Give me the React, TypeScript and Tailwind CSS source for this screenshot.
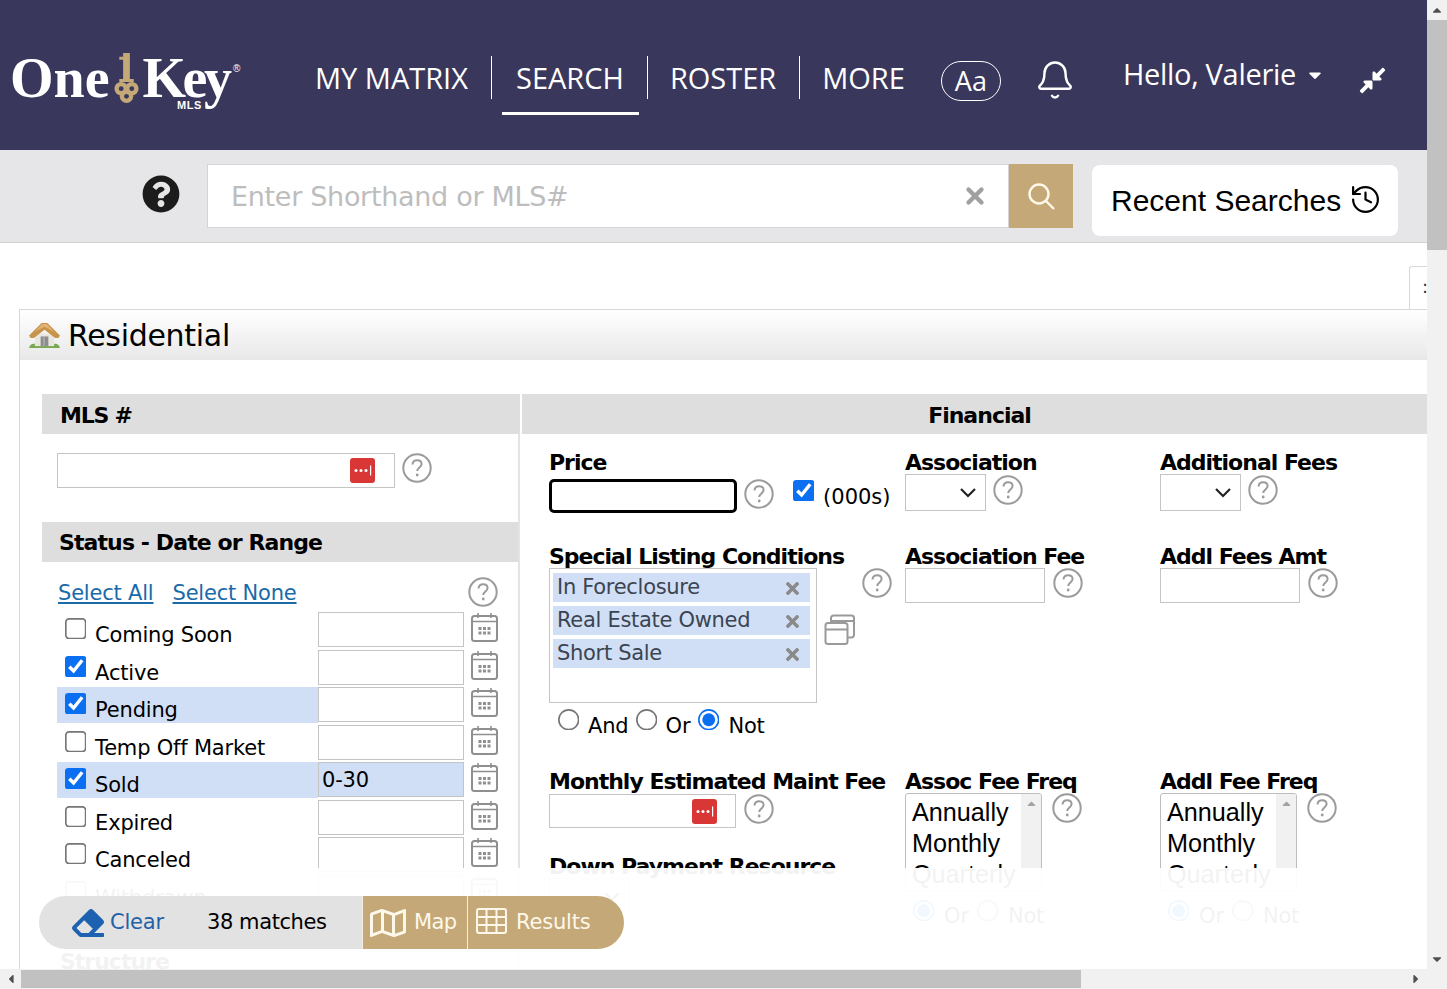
import { Bell, History, X } from "lucide-react";
import { FaCaretDown, FaCaretLeft, FaCaretRight, FaCaretUp, FaCompressAlt, FaEraser, FaQuestionCircle, FaRegMap, FaTimes } from "react-icons/fa";

type Status = { label: string; checked?: boolean; range?: string };

const statuses: Status[] = [
  { label: "Coming Soon" },
  { label: "Active", checked: true },
  { label: "Pending", checked: true },
  { label: "Temp Off Market" },
  { label: "Sold", checked: true, range: "0-30" },
  { label: "Expired" },
  { label: "Canceled" },
  { label: "Withdrawn" },
];

const Help = () => (
  <svg viewBox="0 0 30 30" className="w-[30px] h-[30px] shrink-0">
    <circle cx="15" cy="15" r="13.7" fill="none" stroke="#9b9b9b" strokeWidth="2" />
    <path d="M10.5 11.5c.3-2.8 2.2-4.2 4.6-4.2 2.6 0 4.5 1.5 4.5 3.8 0 3.3-4.4 3.5-4.4 7" fill="none" stroke="#9b9b9b" strokeWidth="2" />
    <circle cx="15.2" cy="22" r="1.4" fill="#9b9b9b" />
  </svg>
);

const Calendar = () => (
  <svg viewBox="0 0 27 30" className="w-[27px] h-[30px] shrink-0" fill="none" stroke="#8f8f8f">
    <rect x="1" y="4" width="25" height="25" rx="2.5" strokeWidth="2" />
    <path d="M1 9.5h25M7 1v5M20 1v5" strokeWidth="1.6" />
    <path d="M7.500 16.500h3M12 16.500h3M16.500 16.500h3M7.500 21h3M12 21h3M16.500 21h3" strokeWidth="3" />
  </svg>
);

const PassIcon = () => (
  <svg viewBox="0 0 25 25" className="w-[25px] h-[25px] shrink-0">
    <rect width="25" height="25" rx="3" fill="#d93735" />
    <circle cx="6" cy="12.5" r="1.5" fill="#fff" />
    <circle cx="11" cy="12.5" r="1.5" fill="#fff" />
    <circle cx="16" cy="12.5" r="1.5" fill="#fff" />
    <rect x="20" y="7.5" width="1.2" height="10" fill="#fff" />
  </svg>
);

const Copies = () => (
  <svg viewBox="0 0 32 31" className="w-[32px] h-[31px]" fill="none" stroke="#9a9a9a" strokeWidth="2">
    <rect x="1.5" y="9" width="22" height="21" rx="2.5" />
    <path d="M1.5 15.5h22M7 9V4a2.5 2.5 0 0 1 2.500-2.500h18a2.500 2.500 0 0 1 2.500 2.500v17a2.500 2.500 0 0 1-2.500 2.500H23.500M7 7h23" />
  </svg>
);

const House = () => (
  <svg viewBox="0 0 32 28" className="w-[31px] h-[27px] shrink-0">
    <path d="M0 27c1-4 4-5 7-4h18c3-1 6 0 7 4z" fill="#79a851" />
    <path d="M6 12h20v13H6z" fill="#e9e6df" />
    <path d="M12 15h8v10h-8z" fill="#8d8d8d" />
    <path d="M15.500 15v10" stroke="#bdbdbd" />
    <path d="M13 1h6l13 13-1.500 2.500H27L16 8 5 16.500H1.500L0 14z" fill="#c8934b" />
    <path d="M13.500 2h5L26 10l-10-5-10 5z" fill="#e0b274" />
  </svg>
);

const Check = ({ checked, radio }: { checked?: boolean; radio?: boolean }) => (
  <input
    type={radio ? "radio" : "checkbox"}
    defaultChecked={checked}
    className="block m-0 w-[14px] h-[14px] [zoom:1.65] accent-[#0b6ff2]"
  />
);

const Chevron = () => (
  <svg viewBox="0 0 16 10" className="w-[16px] h-[10px]" fill="none" stroke="#222" strokeWidth="2.200">
    <path d="m1 1 7 7 7-7" />
  </svg>
);

const Dropdown = () => (
  <div className="w-[81px] h-[37px] border border-[#c4c4c4] flex items-center justify-end pr-[9px]">
    <Chevron />
  </div>
);

const Listbox = () => (
  <div className="w-[137px] h-[98px] border border-[#bdbdbd] rounded-t-[3px] flex overflow-hidden">
    <div className="flex-1 pl-[6px] pt-[3px] font-['Liberation_Sans',sans-serif] text-[25.200px] leading-[31px] text-black">
      <div>Annually</div>
      <div>Monthly</div>
      <div>Quarterly</div>
    </div>
    <div className="w-[20px] bg-[#f1f1f1] flex justify-center pt-[3px] text-[#a3a3a3] text-[13px]">
      <FaCaretUp />
    </div>
  </div>
);

const OrNot = () => (
  <div className="flex items-start mt-[9px] ml-[8px] text-[21px] leading-[30px] tracking-[-0.2px]">
    <Check radio checked />
    <span className="ml-[8px] mr-[8px] mt-[1px]">Or</span>
    <Check radio />
    <span className="ml-[8px] mt-[1px]">Not</span>
  </div>
);

const Label = ({ children }: { children: string }) => (
  <div className="h-[24px] text-[22px] leading-[26px] font-bold tracking-[-1px] text-black whitespace-nowrap">{children}</div>
);

const TextBox = ({ className }: { className: string }) => (
  <input type="text" className={"border border-[#c4c4c4] bg-white outline-none " + className} />
);

const NavLink = ({ label, active }: { label: string; active?: boolean }) => (
  <div className={"h-[67px] flex items-center pl-[14px] pr-[15px] pb-[4px] border-b-[3px] " + (active ? "border-white" : "border-transparent")}>
    {label}
  </div>
);

const StatusRow = ({ s }: { s: Status }) => (
  <div className="h-[37.5px] flex items-start">
    <div className={"w-[261px] h-[36px] flex items-start pl-[8px] " + (s.checked && s.label !== "Active" ? "bg-[#d0dff6]" : "")}>
      <div className="mt-[6px]">
        <Check checked={s.checked} />
      </div>
      <span className="ml-[7px] mt-[9px] text-[21px] leading-[28px] tracking-[-0.2px]">{s.label}</span>
    </div>
    <input
      type="text"
      defaultValue={s.range}
      className={"w-[146px] h-[35px] border border-[#c4c4c4] px-[3px] text-[21px] tracking-[-0.2px] outline-none " + (s.range ? "bg-[#d0dff6]" : "bg-white")}
    />
    <div className="ml-[7px]">
      <Calendar />
    </div>
  </div>
);

export default function App() {
  return (
    <div className="w-[1447px] h-[989px] overflow-hidden flex flex-col bg-white text-black font-['DejaVu_Sans',sans-serif]">
      <div className="flex flex-1 min-h-0">
        <div className="relative w-[1427px] overflow-hidden flex flex-col">
          {/* header */}
          <header className="h-[150px] shrink-0 bg-[#3a375c] text-white flex items-start">
            <div className="w-[301px] shrink-0 pl-[10px] pt-[46px] flex items-start font-['Liberation_Serif',serif] font-bold text-[56px] leading-[64px] relative">
              <span>One</span>
              <svg viewBox="0 0 33 54" className="w-[33px] h-[52px] mt-[7px]" fill="#c4a877">
                <path d="M13 0h7v28h-7zM9 4h4v3H9zM9 27h15v3H9z" />
                <circle cx="11" cy="37" r="7" />
                <circle cx="22" cy="37" r="7" />
                <circle cx="16.500" cy="45" r="7" />
                <circle cx="11" cy="37" r="2.500" fill="#3a375c" />
                <circle cx="22" cy="37" r="2.500" fill="#3a375c" />
                <circle cx="16.500" cy="45" r="2.500" fill="#3a375c" />
              </svg>
              <span className="tracking-[-3.500px]">Key</span>
              <span className="absolute left-[177px] top-[99px] font-['Liberation_Sans',sans-serif] text-[11px] leading-[12px] tracking-[0.5px]">MLS</span>
              <span className="absolute left-[233px] top-[63px] font-['Liberation_Sans',sans-serif] font-normal text-[10px] leading-[12px]">®</span>
            </div>
            <nav className="flex items-start pt-[48px] font-['Open_Sans',sans-serif] text-[29px]">
              <NavLink label="MY MATRIX" />
              <div className="w-[1px] h-[43px] mt-[8px] ml-[8px] mr-[10px] bg-white" />
              <NavLink label="SEARCH" active />
              <div className="w-[1px] h-[43px] mt-[8px] mx-[8px] bg-white" />
              <NavLink label="ROSTER" />
              <div className="w-[1px] h-[43px] mt-[8px] mx-[8px] bg-white" />
              <NavLink label="MORE" />
            </nav>
            <div className="ml-[21px] mt-[61px] w-[60px] h-[40px] rounded-full border border-white flex items-center justify-center font-['Open_Sans',sans-serif] text-[27px]">Aa</div>
            <Bell className="ml-[33px] mt-[59px] w-[42px] h-[42px]" strokeWidth={1.4} />
            <div className="ml-[47px] mt-[54px] font-['Open_Sans',sans-serif] text-[29px] leading-[40px] tracking-[-0.3px] whitespace-nowrap">Hello, Valerie</div>
            <FaCaretDown className="ml-[9px] mt-[65px] w-[20px] h-[20px]" />
            <FaCompressAlt className="ml-[33px] mt-[66px] w-[29px] h-[29px]" />
          </header>

          {/* quick search */}
          <div className="h-[93px] shrink-0 bg-[#e6e6e8] border-b border-[#d2d2d2] flex items-start">
            <FaQuestionCircle className="ml-[142px] mt-[25px] w-[38px] h-[38px] text-[#1c1c1c]" />
            <div className="ml-[27px] mt-[14px] w-[802px] h-[64px] bg-white border border-[#d4d4d4] flex items-center pl-[23px] pr-[20px]">
              <span className="flex-1 pt-[3px] text-[27px] tracking-[-0.3px] text-[#bdbdbd] whitespace-nowrap">Enter Shorthand or MLS#</span>
              <X className="w-[26px] h-[26px] text-[#a0a0a0]" strokeWidth={4} />
            </div>
            <div className="mt-[14px] w-[64px] h-[64px] bg-[#c4a877] flex items-center justify-center">
              <svg viewBox="0 0 27 27" className="w-[27px] h-[27px]" fill="none" stroke="#fff9ea" strokeWidth="2.400">
                <circle cx="11" cy="11" r="9.500" />
                <path d="m18 18 8 8" />
              </svg>
            </div>
            <div className="ml-[19px] mt-[15px] w-[306px] h-[71px] bg-white rounded-[8px] flex items-center pl-[19px] font-['Liberation_Sans',sans-serif] text-[30px]">
              <span>Recent Searches</span>
              <History className="ml-[8px] mt-[-3px] w-[33px] h-[33px] text-black" strokeWidth={1.6} />
            </div>
          </div>

          <div className="h-[66px] shrink-0 flex justify-end items-start">
            <div className="mt-[23px] w-[18px] h-[43px] border-l border-t border-[#d8d8d8] rounded-tl-[3px] pl-[12px] pt-[8px] text-[18px] leading-[24px] text-[#333]">:</div>
          </div>

          {/* search form */}
          <div className="ml-[19px] w-[1440px] flex-1 border-l border-t border-[#d8d8d8]">
            <div className="h-[50px] bg-gradient-to-b from-white to-[#e8e8e8] flex items-center pl-[9px] pt-[1px]">
              <House />
              <span className="ml-[8px] text-[30px] tracking-[-0.3px]">Residential</span>
            </div>

            <div className="ml-[22px] mt-[34px] flex items-start">
              <div className="w-[478px] shrink-0 border-r-2 border-[#e4e4e4] mr-[2px]">
                <div className="h-[40px] mr-[-2px] bg-[#dedede] pl-[18px] text-[22px] leading-[44px] font-bold tracking-[-1.2px]">MLS #</div>
                <div className="h-[88px] pl-[15px] pt-[19px] flex items-start">
                  <div className="w-[338px] h-[35px] border border-[#c4c4c4] flex items-center justify-end pr-[19px]">
                    <PassIcon />
                  </div>
                  <div className="ml-[7px]">
                    <Help />
                  </div>
                </div>
                <div className="h-[40px] bg-[#dedede] pl-[17px] text-[22px] leading-[42px] font-bold tracking-[-0.9px]">Status - Date or Range</div>
                <div className="h-[50px] pl-[16px] pt-[17px] flex items-start text-[21px] leading-[28px] tracking-[-0.2px] text-[#1a6aa8] underline">
                  <span>Select All</span>
                  <span className="ml-[19px]">Select None</span>
                  <div className="ml-[171px] mt-[-2px]">
                    <Help />
                  </div>
                </div>
                <div className="pl-[15px]">
                  {statuses.map((s) => (
                    <StatusRow key={s.label} s={s} />
                  ))}
                </div>
                <div className="mt-[28px] pl-[18px] h-[40px] text-[22px] leading-[44px] font-bold tracking-[-1px]">Structure</div>
              </div>

              <div className="w-[916px] shrink-0">
                <div className="h-[40px] bg-[#dedede] text-center text-[22px] leading-[44px] font-bold tracking-[-1px] pr-[1px]">Financial</div>
                <div className="pl-[27px] pt-[16px] grid grid-cols-[356px_255px_1fr] grid-rows-[94px_225px_85px_auto]">
                  {/* row 1 */}
                  <div>
                    <Label>Price</Label>
                    <div className="mt-[5px] flex items-start">
                      <input type="text" className="w-[188px] h-[34px] border-[3px] border-black rounded-[5px] outline-none" />
                      <div className="ml-[7px]">
                        <Help />
                      </div>
                      <div className="ml-[19px] mt-[1px]">
                        <Check checked />
                      </div>
                      <span className="ml-[7px] mt-[3px] text-[21px] leading-[30px]">(000s)</span>
                    </div>
                  </div>
                  <div>
                    <Label>Association</Label>
                    <div className="flex items-start">
                      <Dropdown />
                      <div className="ml-[7px] mt-[1px]">
                        <Help />
                      </div>
                    </div>
                  </div>
                  <div>
                    <Label>Additional Fees</Label>
                    <div className="flex items-start">
                      <Dropdown />
                      <div className="ml-[7px] mt-[1px]">
                        <Help />
                      </div>
                    </div>
                  </div>

                  {/* row 2 */}
                  <div>
                    <Label>Special Listing Conditions</Label>
                    <div className="flex items-start">
                      <div className="w-[268px] h-[135px] border border-[#c4c4c4] pl-[3px] pr-[6px] pt-[4px] flex flex-col gap-[4px]">
                        {["In Foreclosure", "Real Estate Owned", "Short Sale"].map((c) => (
                          <div key={c} className="h-[29px] bg-[#d0dff6] flex items-center justify-between pl-[4px] pr-[8px] pt-[1px] text-[21px] tracking-[-0.3px] text-[#3c4450]">
                            <span>{c}</span>
                            <FaTimes className="w-[19px] h-[19px] text-[#8a8a8a]" />
                          </div>
                        ))}
                      </div>
                      <div className="ml-[7px] flex flex-col">
                        <div className="ml-[38px]">
                          <Help />
                        </div>
                        <div className="mt-[16px]">
                          <Copies />
                        </div>
                      </div>
                    </div>
                    <div className="flex items-start mt-[6px] ml-[9px] text-[21px] leading-[30px] tracking-[-0.2px]">
                      <Check radio />
                      <span className="ml-[7px] mt-[2px]">And</span>
                      <div className="ml-[7px]">
                        <Check radio />
                      </div>
                      <span className="ml-[7px] mt-[2px]">Or</span>
                      <div className="ml-[8px]">
                        <Check radio checked />
                      </div>
                      <span className="ml-[7px] mt-[2px]">Not</span>
                    </div>
                  </div>
                  <div>
                    <Label>Association Fee</Label>
                    <div className="flex items-start">
                      <TextBox className="w-[140px] h-[35px]" />
                      <div className="ml-[8px]">
                        <Help />
                      </div>
                    </div>
                  </div>
                  <div>
                    <Label>Addl Fees Amt</Label>
                    <div className="flex items-start">
                      <TextBox className="w-[140px] h-[35px]" />
                      <div className="ml-[8px]">
                        <Help />
                      </div>
                    </div>
                  </div>

                  {/* row 3 */}
                  <div>
                    <Label>Monthly Estimated Maint Fee</Label>
                    <div className="mt-[1px] flex items-start">
                      <div className="w-[187px] h-[34px] border border-[#c4c4c4] flex items-center justify-end pr-[18px]">
                        <PassIcon />
                      </div>
                      <div className="ml-[8px]">
                        <Help />
                      </div>
                    </div>
                  </div>
                  <div className="row-span-2">
                    <Label>Assoc Fee Freq</Label>
                    <div className="flex items-start">
                      <Listbox />
                      <div className="ml-[10px]">
                        <Help />
                      </div>
                    </div>
                    <OrNot />
                  </div>
                  <div className="row-span-2">
                    <Label>Addl Fee Freq</Label>
                    <div className="flex items-start">
                      <Listbox />
                      <div className="ml-[10px]">
                        <Help />
                      </div>
                    </div>
                    <OrNot />
                  </div>

                  {/* row 4 */}
                  <div>
                    <Label>Down Payment Resource</Label>
                    <Dropdown />
                  </div>
                </div>
              </div>
            </div>
          </div>

          {/* fade over the form, action pill on top */}
          <div className="absolute left-[20px] right-0 top-[868px] bottom-0 bg-white/95" />
          <div className="absolute left-[39px] top-[896px] w-[585px] h-[53px] rounded-full overflow-hidden flex text-[21px] tracking-[-0.2px]">
            <div className="w-[323px] bg-[#e2e2e2] flex items-center pl-[33px] pt-[1px]">
              <FaEraser className="w-[32px] h-[32px] text-[#1c62b0]" />
              <span className="ml-[6px] text-[#2261a8]">Clear</span>
              <span className="ml-[43px] tracking-[-0.4px]">38 matches</span>
            </div>
            <div className="w-[105px] bg-[#c4a877] border-l border-[#f5efe0] flex items-center pl-[7px] pt-[1px] text-[#fdf8ea]">
              <FaRegMap className="w-[36px] h-[32px]" />
              <span className="ml-[8px] tracking-[-0.6px]">Map</span>
            </div>
            <div className="flex-1 bg-[#c4a877] border-l border-[#f5efe0] flex items-center pl-[8px] pt-[1px] text-[#fdf8ea]">
              <svg viewBox="0 0 31 26" className="w-[31px] h-[26px] mt-[-4px]" fill="none" stroke="currentColor" strokeWidth="2">
                <rect x="1" y="1" width="29" height="24" rx="2" />
                <path d="M1 9h29M1 17h29M10.500 1v24M20.500 1v24" />
              </svg>
              <span className="ml-[9px]">Results</span>
            </div>
          </div>
        </div>

        {/* vertical scrollbar */}
        <div className="w-[20px] bg-[#f1f1f1] flex flex-col items-center text-[#505050] text-[14px]">
          <div className="h-[20px] flex items-center"><FaCaretUp /></div>
          <div className="w-full h-[230px] bg-[#c1c1c1]" />
          <div className="mt-auto h-[20px] flex items-center"><FaCaretDown /></div>
        </div>
      </div>

      {/* horizontal scrollbar */}
      <div className="h-[20px] shrink-0 bg-[#f1f1f1] flex items-center text-[#505050] text-[14px]">
        <div className="w-[21px] flex justify-center"><FaCaretLeft /></div>
        <div className="w-[1060px] h-[18px] bg-[#c1c1c1]" />
        <div className="ml-auto w-[42px] pr-[20px] flex justify-center"><FaCaretRight /></div>
      </div>
    </div>
  );
}
